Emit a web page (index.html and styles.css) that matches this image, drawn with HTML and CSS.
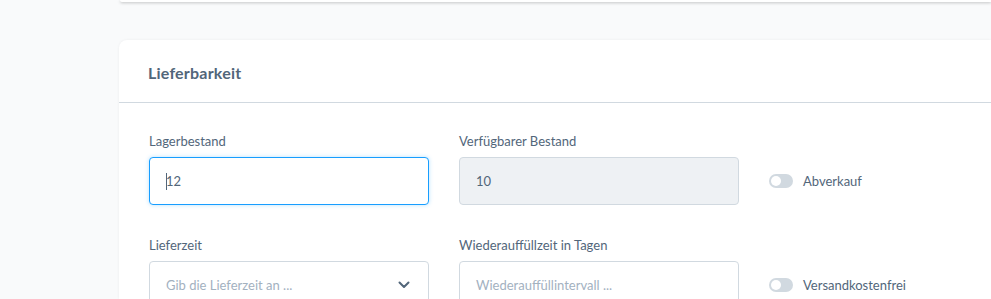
FILE: index.html
```html
<!DOCTYPE html>
<html lang="de">
<head>
    <meta charset="UTF-8">
    <meta name="viewport" content="width=device-width, initial-scale=1.0">
    <title>Lieferbarkeit</title>
    <link rel="stylesheet" href="styles.css">
</head>
<body>
    <div class="page">
        <div class="card-prev"></div>

        <div class="card">
            <div class="card-header">
                <h3>Lieferbarkeit</h3>
            </div>
            <div class="card-body">
                <div class="row">
                    <div class="field">
                        <label for="stock">Lagerbestand</label>
                        <div class="input focused">
                            <span class="caret"></span><span class="value">12</span>
                        </div>
                    </div>
                    <div class="field">
                        <label for="available">Verfügbarer Bestand</label>
                        <div class="input disabled"><span class="value">10</span></div>
                    </div>
                    <div class="switch-field">
                        <span class="switch"></span>
                        <span class="switch-label">Abverkauf</span>
                    </div>
                </div>
                <div class="row">
                    <div class="field">
                        <label>Lieferzeit</label>
                        <div class="input select">
                            <span class="placeholder">Gib die Lieferzeit an ...</span>
                            <svg class="chevron" width="12" height="8" viewBox="0 0 12 8">
                                <path d="M1.5 1.5 L6 6 L10.5 1.5" fill="none" stroke="#52667a" stroke-width="2" stroke-linecap="round" stroke-linejoin="round"/>
                            </svg>
                        </div>
                    </div>
                    <div class="field">
                        <label>Wiederauffüllzeit in Tagen</label>
                        <div class="input">
                            <span class="placeholder">Wiederauffüllintervall ...</span>
                        </div>
                    </div>
                    <div class="switch-field">
                        <span class="switch"></span>
                        <span class="switch-label">Versandkostenfrei</span>
                    </div>
                </div>
            </div>
        </div>
    </div>
</body>
</html>
```

FILE: styles.css
```css
body {
    margin: 0;
    background-color: #f9fafb;
    font-family: Lato, "Noto Sans", sans-serif;
    color: #52667a;
    height: 299px;
    overflow: hidden;
}

.page {
    padding-left: 119px;
}

.card-prev {
    height: 2px;
    margin-bottom: 38px;
    background: #fff;
    border-radius: 0 0 0 8px;
    box-shadow: 0 1px 3px rgba(0, 0, 0, 0.25);
    margin-left: 1px;
}

.card {
    background: #fff;
    border-radius: 8px 0 0 0;
    box-shadow: 0 0 3px rgba(0, 0, 0, 0.06);
    height: 259px;
    overflow: hidden;
}

.card-header {
    height: 62px;
    display: flex;
    align-items: center;
    padding: 0 29px;
    border-bottom: 1px solid #d1d9e0;
}

.card-header h3 {
    margin: 0;
    padding-top: 2px;
    font-size: 16px;
    font-weight: 700;
    color: #52667a;
    letter-spacing: 0.2px;
}

.card-body {
    padding: 28px 30px 0;
}

.row {
    display: flex;
    gap: 30px;
    margin-bottom: 30px;
}

.field {
    width: 280px;
    display: flex;
    flex-direction: column;
}

.field label {
    font-size: 13px;
    line-height: 20px;
    margin-bottom: 6px;
    color: #52667a;
}

.input {
    box-sizing: border-box;
    height: 48px;
    border: 1px solid #d1d9e0;
    border-radius: 4px;
    display: flex;
    align-items: center;
    padding: 0 16px;
    font-size: 13px;
    background: #fff;
}

.input.focused {
    border-color: #189eff;
    box-shadow: 0 0 4px rgba(24, 158, 255, 0.3);
}

.input.disabled {
    background: #eef1f4;
}

.value {
    color: #52667a;
}

.caret {
    width: 1px;
    height: 17px;
    background: #52667a;
    margin-right: -1px;
}

.placeholder {
    color: #a3b1bf;
    flex: 1;
}

.chevron {
    margin-right: 2px;
}

.switch-field {
    display: flex;
    align-items: center;
    gap: 10px;
    padding-top: 26px;
    font-size: 13px;
}

.switch {
    position: relative;
    width: 24px;
    height: 14px;
    border-radius: 7px;
    background: #d1d9e0;
}

.switch::after {
    content: "";
    position: absolute;
    left: 2px;
    top: 2px;
    width: 10px;
    height: 10px;
    border-radius: 50%;
    background: #fff;
}
```
